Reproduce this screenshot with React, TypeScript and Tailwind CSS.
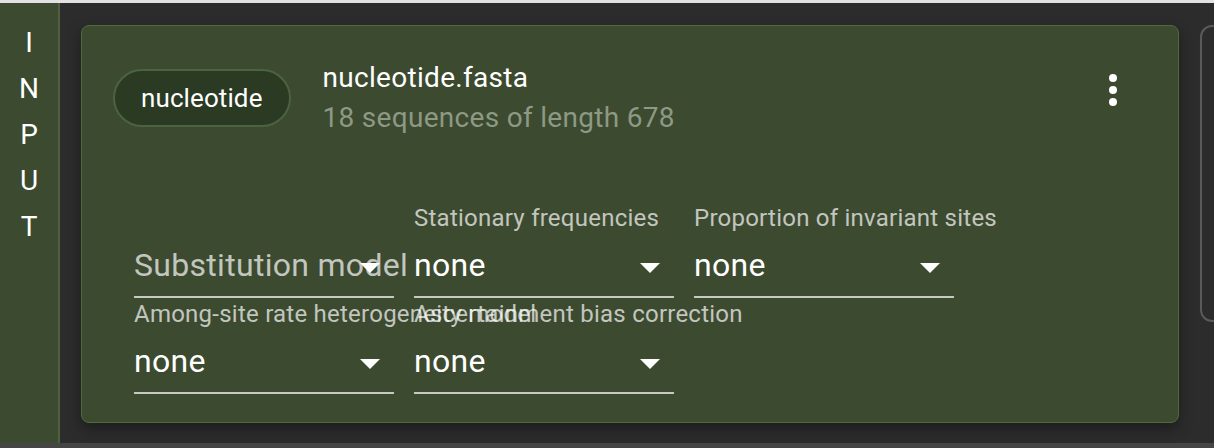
import React from "react";

type SelProps = { label: string; value?: string };

function Arrow() {
  return (
    <svg
      className="absolute right-[14px] top-[29px]"
      width="20"
      height="10"
      viewBox="0 0 20 10"
    >
      <path d="M0 0 L10 10 L20 0 Z" fill="#ffffff" />
    </svg>
  );
}

function Sel({ label, value }: SelProps) {
  const shrunk = value !== undefined;
  return (
    <div className="relative flex h-[96px] w-[260px] flex-col">
      <div className="h-[32px] whitespace-nowrap text-[24px] leading-[32px] tracking-[0.24px] text-white/70">
        {shrunk ? label : ""}
      </div>
      <div className="relative h-[64px] border-b-2 border-[#c5c9c1]">
        <div
          className={
            shrunk
              ? "whitespace-nowrap pt-[8px] text-[32px] leading-[46px] tracking-[0.3px] text-white"
              : "whitespace-nowrap pt-[8px] text-[32px] leading-[46px] tracking-[0.3px] text-white/70"
          }
        >
          {shrunk ? value : label}
        </div>
        <Arrow />
      </div>
    </div>
  );
}

export default function App() {
  return (
    <div
      className="flex h-[448px] w-[1214px] flex-col overflow-hidden bg-[#2c2c2c]"
      style={{ fontFamily: "Roboto, 'Noto Sans', sans-serif" }}
    >
      <div className="h-[3px] w-full bg-[#e2e2e2]" />
      <div className="flex h-[440px] w-full">
        <div className="flex w-[60px] shrink-0 flex-col items-center border-r-2 border-[#4d6140] bg-[#3c4a2f] pt-[17px] text-[28px] leading-[46px] text-white">
          <span>I</span>
          <span>N</span>
          <span>P</span>
          <span>U</span>
          <span>T</span>
        </div>
        <div className="flex flex-1 items-start gap-[21px] pl-[21px] pt-[22px]">
          <div className="flex h-[398px] w-[1098px] shrink-0 flex-col rounded-[8px] border border-[#4f6a3e] bg-[#3c4a2f] pl-[31px] pr-[32px] pt-[32px] shadow-[0_6px_14px_rgba(0,0,0,0.35)]">
            <div className="flex h-[80px] items-center">
              <div className="flex h-[58px] items-center rounded-full border-2 border-[#4b6340] bg-[#2b3a22] px-[26px] text-[26px] tracking-[0.1px] text-white">
                nucleotide
              </div>
              <div className="ml-[32px] flex flex-col">
                <div className="text-[28px] leading-[40px] tracking-[0.3px] text-white">
                  nucleotide.fasta
                </div>
                <div className="text-[28px] leading-[40px] tracking-[0.3px] text-[#8d9985]">
                  18 sequences of length 678
                </div>
              </div>
              <div className="ml-auto mr-[9px] mt-[8px] self-start">
                <svg width="48" height="48" viewBox="0 0 24 24">
                  <circle cx="12" cy="6" r="2" fill="#ffffff" />
                  <circle cx="12" cy="12" r="2" fill="#ffffff" />
                  <circle cx="12" cy="18" r="2" fill="#ffffff" />
                </svg>
              </div>
            </div>
            <div className="ml-[21px] mt-[64px] grid w-[820px] grid-cols-[260px_260px_260px] gap-x-[20px]">
              <Sel label="Substitution model" />
              <Sel label="Stationary frequencies" value="none" />
              <Sel label="Proportion of invariant sites" value="none" />
              <Sel label="Among-site rate heterogeneity model" value="none" />
              <Sel label="Ascertainment bias correction" value="none" />
            </div>
          </div>
          <div className="h-[297px] w-[60px] shrink-0 rounded-[12px] border-2 border-[#5a5a5a]" />
        </div>
      </div>
      <div className="h-[5px] w-full bg-[#454545]" />
    </div>
  );
}
